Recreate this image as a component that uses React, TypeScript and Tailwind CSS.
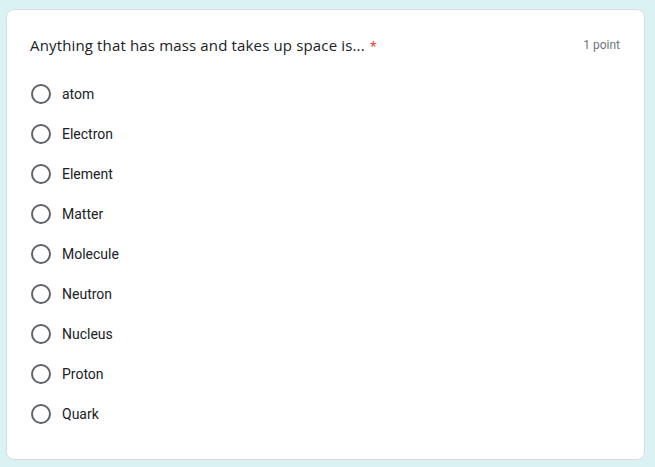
const options = ['atom', 'Electron', 'Element', 'Matter', 'Molecule', 'Neutron', 'Nucleus', 'Proton', 'Quark']

export default function App() {
  return (
    <div className="min-h-[467px] w-[655px] bg-[#daf2f3] pl-[6px] pr-[10px] pt-[9px] pb-[7px]">
      <div className="h-[451px] rounded-[8px] border border-[#dadce0] bg-white pl-[23px] pr-[24px] pt-[23px]">
        <div className="flex items-start justify-between">
          <div className="text-[15px] leading-[24px] text-[#202124] tracking-[0.15px]" style={{ fontFamily: '"Open Sans", Roboto, sans-serif' }}>
            Anything that has mass and takes up space is...
            <span className="ml-[5px] text-[13px] text-[#d93025]">*</span>
          </div>
          <div className="pt-[2px] text-[12px] leading-[20px] text-[#70757a]" style={{ fontFamily: 'Roboto, sans-serif' }}>
            1 point
          </div>
        </div>
        <div className="mt-[16px] flex flex-col">
          {options.map((o) => (
            <label key={o} className="flex h-[40px] items-center">
              <span className="ml-[1px] h-[20px] w-[20px] rounded-full border-2 border-[#5f6368]" />
              <span className="ml-[11px] text-[14px] text-[#202124]" style={{ fontFamily: 'Roboto, sans-serif' }}>
                {o}
              </span>
            </label>
          ))}
        </div>
      </div>
    </div>
  )
}
